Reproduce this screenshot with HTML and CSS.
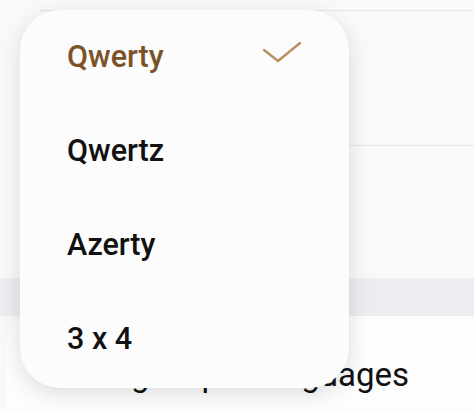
FILE: index.html
```html
<!DOCTYPE html>
<html lang="en">
<head>
    <meta charset="UTF-8">
    <meta name="viewport" content="width=device-width, initial-scale=1.0">
    <title>Keyboard layout</title>
    <link rel="stylesheet" href="styles.css">
</head>
<body>
    <div class="screen">
        <div class="settings">
            <div class="group">
                <div class="row row-first"></div>
                <div class="row row-second"></div>
            </div>
            <div class="band"></div>
            <div class="bottom-card">
                <p class="bottom-title">Manage input languages</p>
            </div>
        </div>

        <div class="popup">
            <div class="popup-item selected">
                <span>Qwerty</span>
                <svg class="check" width="40" height="24" viewBox="0 0 40 24">
                    <path d="M2 9 L16 20 L38 2" fill="none" stroke="#b8905e" stroke-width="2.4" stroke-linecap="round" stroke-linejoin="round"/>
                </svg>
            </div>
            <div class="popup-item">Qwertz</div>
            <div class="popup-item">Azerty</div>
            <div class="popup-item">3 x 4</div>
        </div>
    </div>
</body>
</html>
```

FILE: styles.css
```css
body {
    margin: 0;
    font-family: Roboto, "Noto Sans", sans-serif;
    background-color: #f9f9f9;
}

.screen {
    position: relative;
    width: 474px;
    height: 411px;
    overflow: hidden;
}

.settings {
    padding-top: 10px;
}

.group {
    margin-left: 40px;
}

.row {
    border-top: 1px solid #e6e6e6;
}

.row-first {
    height: 134px;
}

.row-second {
    height: 132px;
}

.band {
    height: 38px;
    background-color: #ededf1;
}

.bottom-card {
    margin-left: 6px;
    height: 120px;
    background-color: #fdfdfd;
    border-radius: 30px 0 0 0;
}

.bottom-title {
    margin: 0;
    padding: 38px 0 0 42px;
    font-size: 33px;
    line-height: 42px;
    color: #111;
}

.popup {
    position: absolute;
    left: 20px;
    top: 10px;
    width: 329px;
    height: 378px;
    background-color: #fcfcfc;
    border-radius: 40px;
    box-shadow: 0 6px 22px rgba(0, 0, 0, 0.13);
}

.popup-item {
    display: flex;
    align-items: center;
    justify-content: space-between;
    height: 94px;
    padding: 0 47px 0 47px;
    font-size: 30.5px;
    font-weight: 500;
    line-height: 94px;
    color: #111;
}

.popup-item.selected {
    color: #7b522a;
}

.check {
    margin-top: -8px;
}
```
